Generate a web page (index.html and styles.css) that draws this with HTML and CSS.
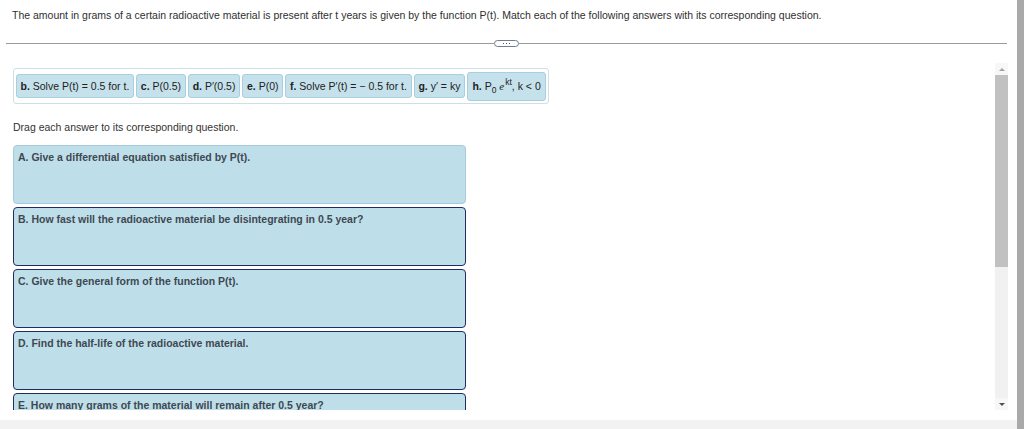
FILE: index.html
```html
<!DOCTYPE html>
<html>
<head>
<meta charset="utf-8">
<link rel="stylesheet" href="styles.css">
</head>
<body>
<div class="main">
  <div class="header">The amount in grams of a certain radioactive material is present after t years is given by the function P(t). Match each of the following answers with its corresponding question.</div>
  <div class="divider">
    <div class="rule"></div>
    <div class="pill"><span></span><span></span><span></span></div>
    <div class="rule"></div>
  </div>
  <div class="pane">
    <div class="content">
      <div class="answers">
        <div class="chip"><span><b>b.</b> Solve P(t) = 0.5 for t.</span></div>
        <div class="chip"><span><b>c.</b> P(0.5)</span></div>
        <div class="chip"><span><b>d.</b> P′(0.5)</span></div>
        <div class="chip"><span><b>e.</b> P(0)</span></div>
        <div class="chip"><span><b>f.</b> Solve P′(t) = − 0.5 for t.</span></div>
        <div class="chip"><span><b>g.</b> y′ = ky</span></div>
        <div class="chip tall"><span><b>h.</b> P<sub>0</sub> <i class="e">e</i><sup>kt</sup>, k &lt; 0</span></div>
      </div>
      <div class="instr">Drag each answer to its corresponding question.</div>
      <div class="boxes">
        <div class="box light">A. Give a differential equation satisfied by P(t).</div>
        <div class="box">B. How fast will the radioactive material be disintegrating in 0.5 year?</div>
        <div class="box">C. Give the general form of the function P(t).</div>
        <div class="box">D. Find the half-life of the radioactive material.</div>
        <div class="box">E. How many grams of the material will remain after 0.5 year?</div>
      </div>
    </div>
    <div class="scrollbar">
      <div class="sb-btn"><span class="arr up"></span></div>
      <div class="sb-thumb"></div>
      <div class="sb-track"></div>
      <div class="sb-btn"><span class="arr down"></span></div>
    </div>
  </div>
  <div class="spacer"></div>
  <div class="footer"></div>
</div>
<div class="stripe"></div>
</body>
</html>
```
FILE: styles.css
```css
html, body {
  margin: 0;
  padding: 0;
  height: 429px;
  overflow: hidden;
  background: #fff;
}
body {
  display: flex;
  font-family: "Liberation Sans", Arial, sans-serif;
  color: #333;
}
.main {
  width: 1017px;
  display: flex;
  flex-direction: column;
}
.stripe {
  width: 7px;
  background: #a9a9a9;
}
.header {
  height: 40px;
  box-sizing: border-box;
  padding: 9px 0 0 12px;
  font-size: 10.5px;
  line-height: 12px;
  color: #2f2f2f;
}
.divider {
  display: flex;
  align-items: center;
  height: 7px;
  padding: 0 10px 0 6px;
}
.rule {
  flex: 1;
  height: 1px;
  background: #9a9a9a;
}
.pill {
  width: 23px;
  height: 5px;
  border: 1px solid #6f7d8e;
  border-radius: 4px;
  display: flex;
  justify-content: center;
  align-items: center;
  gap: 2px;
  background: #fff;
}
.pill span {
  width: 1px;
  height: 1px;
  background: #44546a;
}
.pane {
  margin-top: 16px;
  height: 347px;
  display: flex;
}
.content {
  flex: 1;
  overflow: hidden;
  padding: 5px 0 0 13px;
}
.answers {
  display: inline-flex;
  align-items: center;
  gap: 2px;
  height: 36px;
  box-sizing: border-box;
  padding: 0 2px 0 2px;
  border: 1px solid #cddfe7;
  border-radius: 3px;
}
.chip {
  height: 24px;
  box-sizing: border-box;
  padding: 0 4px 0 3.5px;
  display: flex;
  align-items: center;
  white-space: nowrap;
  font-size: 10.5px;
  line-height: 12px;
  color: #222;
  background: #c5e1eb;
  border: 1px solid #a9cedd;
  border-radius: 3px;
}
.chip.tall {
  height: 29px;
  padding: 0 4px;
}
.chip sub {
  font-size: 8.5px;
  vertical-align: -3px;
  line-height: 0;
}
.chip sup {
  font-size: 8.5px;
  vertical-align: 5px;
  line-height: 0;
}
.chip .e {
  font-family: "Liberation Serif", serif;
  font-size: 11px;
  margin-right: 1px;
}
.instr {
  margin-top: 17px;
  height: 12px;
  line-height: 12px;
  font-size: 10.5px;
  color: #333;
}
.boxes {
  margin-top: 12px;
  width: 453px;
  display: flex;
  flex-direction: column;
  gap: 3px;
}
.box {
  height: 59px;
  flex-shrink: 0;
  box-sizing: border-box;
  padding: 5px 4px;
  background: #bedfea;
  border: 1px solid #1e2d62;
  border-radius: 4px;
  font-size: 10.5px;
  line-height: 12px;
  font-weight: bold;
  color: #3e4851;
}
.box.light {
  border-color: #a6cad8;
}
.scrollbar {
  width: 13px;
  margin-right: 9px;
  display: flex;
  flex-direction: column;
  background: #f1f1f1;
}
.sb-btn {
  height: 12px;
  display: flex;
  align-items: center;
  justify-content: center;
  background: #f7f7f7;
}
.arr {
  width: 0;
  height: 0;
  border-left: 3px solid transparent;
  border-right: 3px solid transparent;
}
.arr.up {
  border-bottom: 3px solid #a3a3a3;
}
.arr.down {
  border-top: 3px solid #505050;
}
.sb-thumb {
  height: 192px;
  background: #c1c1c1;
}
.sb-track {
  flex: 1;
  background: #f1f1f1;
}
.spacer {
  flex: 1;
}
.footer {
  height: 9px;
  background: #f2f2f2;
}
```
